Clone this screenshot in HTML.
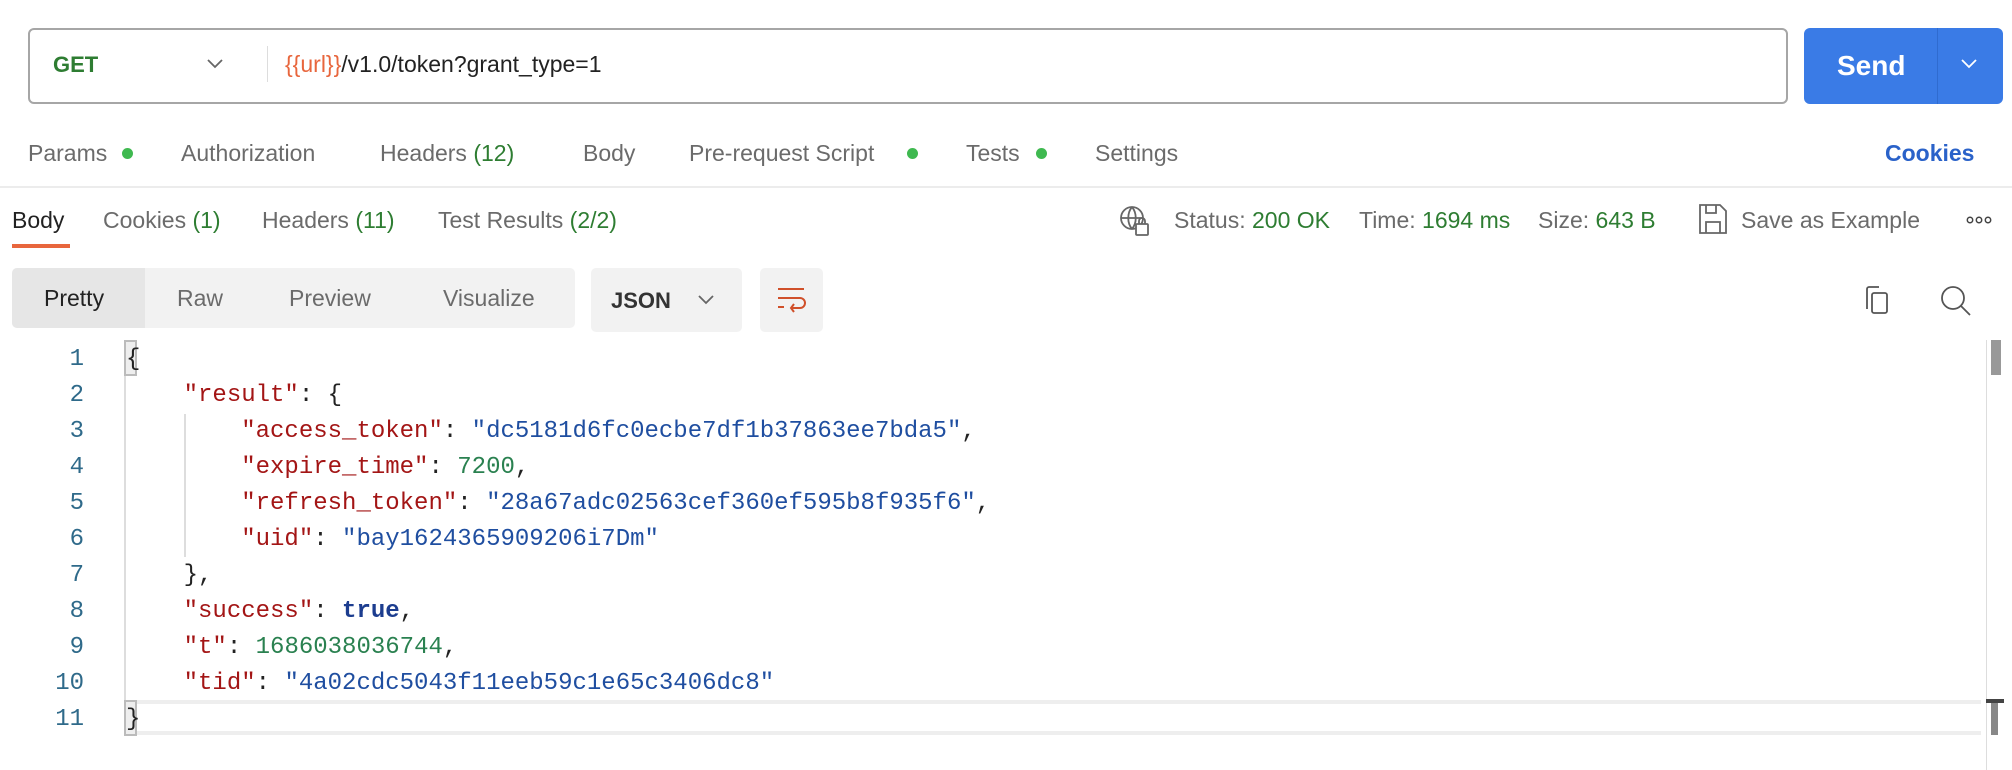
<!DOCTYPE html>
<html><head><meta charset="utf-8"><style>
*{margin:0;padding:0;box-sizing:border-box}
body{width:2012px;height:770px;background:#fff;position:relative;overflow:hidden;font-family:"Liberation Sans",sans-serif;color:#6b6b6b}
.a{position:absolute;white-space:nowrap}
.t{font-size:23px;top:140px}
.g{color:#2e7d32}
.dot{position:absolute;width:11px;height:11px;border-radius:50%;background:#3fb950;top:148px}
.s{font-size:23px;top:207px}
.code{font-family:"Liberation Mono",monospace;font-size:24px;line-height:36px}
.ln{position:absolute;left:40px;width:44px;text-align:right;color:#2f6a8a;font-family:"Liberation Mono",monospace;font-size:24px}
.k{color:#a31515}.str{color:#1f4ea0}.n{color:#2a8150}.b{color:#1c3d8f;font-weight:bold}.p{color:#222}
.code div{white-space:pre}
</style></head><body>
<div class="a" style="left:28px;top:28px;width:1760px;height:76px;border:2px solid #a6a6a6;border-radius:6px"></div>
<div class="a" style="left:53px;top:52px;font-size:22px;font-weight:bold;color:#2e7d32">GET</div>
<svg class="a" style="left:206px;top:58px" width="18" height="12"><path d="M2 2l7 7 7-7" fill="none" stroke="#666" stroke-width="1.8"/></svg>
<div class="a" style="left:267px;top:46px;width:1px;height:36px;background:#ddd"></div>
<div class="a" style="left:285px;top:51px;font-size:23px;color:#222"><span style="color:#e8663d">{{url}}</span>/v1.0/token?grant_type=1</div>
<div class="a" style="left:1804px;top:28px;width:199px;height:76px;background:#3a7be6;border-radius:6px"></div>
<div class="a" style="left:1937px;top:28px;width:1px;height:76px;background:#2f6bd0"></div>
<div class="a" style="left:1837px;top:50px;font-size:28px;font-weight:bold;color:#fff">Send</div>
<svg class="a" style="left:1960px;top:58px" width="18" height="12"><path d="M2 2l7 7 7-7" fill="none" stroke="#fff" stroke-width="1.8"/></svg>

<div class="a t" style="left:28px">Params</div><div class="dot" style="left:122px"></div>
<div class="a t" style="left:181px">Authorization</div>
<div class="a t" style="left:380px">Headers <span class="g">(12)</span></div>
<div class="a t" style="left:583px">Body</div>
<div class="a t" style="left:689px">Pre-request Script</div><div class="dot" style="left:907px"></div>
<div class="a t" style="left:966px">Tests</div><div class="dot" style="left:1036px"></div>
<div class="a t" style="left:1095px">Settings</div>
<div class="a t" style="left:1885px;color:#2a62c9;font-weight:bold">Cookies</div>
<div class="a" style="left:0;top:186px;width:2012px;height:2px;background:#ececec"></div>

<div class="a s" style="left:12px;color:#222">Body</div>
<div class="a" style="left:12px;top:244px;width:58px;height:4px;background:#e8663d"></div>
<div class="a s" style="left:103px">Cookies <span class="g">(1)</span></div>
<div class="a s" style="left:262px">Headers <span class="g">(11)</span></div>
<div class="a s" style="left:438px">Test Results <span class="g">(2/2)</span></div>
<svg class="a" style="left:1118px;top:204px" width="34" height="34" fill="none" stroke="#666" stroke-width="1.8"><circle cx="14" cy="14" r="11"/><path d="M3 14h22M14 3c-5 6-5 16 0 22M14 3c5 6 5 16 0 22"/><rect x="18" y="20" width="12" height="11" fill="#fff" rx="1"/><path d="M21 20v-3a3 3 0 0 1 6 0v3"/></svg>
<div class="a s" style="left:1174px">Status: <span class="g">200 OK</span></div>
<div class="a s" style="left:1359px">Time: <span class="g">1694 ms</span></div>
<div class="a s" style="left:1538px">Size: <span class="g">643 B</span></div>
<svg class="a" style="left:1698px;top:203px" width="30" height="32" fill="none" stroke="#666" stroke-width="1.8"><path d="M2 2h20l6 6v22H2z"/><path d="M8 2v8h10V2M8 30V19h14v11"/></svg>
<div class="a s" style="left:1741px">Save as Example</div>
<svg class="a" style="left:1966px;top:215px" width="26" height="10" fill="none" stroke="#444" stroke-width="1.5"><circle cx="4" cy="5" r="2.7"/><circle cx="13" cy="5" r="2.7"/><circle cx="22" cy="5" r="2.7"/></svg>

<div class="a" style="left:12px;top:268px;width:563px;height:60px;background:#f2f2f2;border-radius:5px"></div>
<div class="a" style="left:12px;top:268px;width:133px;height:60px;background:#e6e6e6;border-radius:5px 0 0 5px"></div>
<div class="a s" style="left:44px;top:285px;color:#222">Pretty</div>
<div class="a s" style="left:177px;top:285px">Raw</div>
<div class="a s" style="left:289px;top:285px">Preview</div>
<div class="a s" style="left:443px;top:285px">Visualize</div>
<div class="a" style="left:591px;top:268px;width:151px;height:64px;background:#f2f2f2;border-radius:5px"></div>
<div class="a s" style="left:611px;top:288px;color:#333;font-weight:bold;font-size:22px">JSON</div>
<svg class="a" style="left:697px;top:294px" width="18" height="12"><path d="M2 2l7 7 7-7" fill="none" stroke="#666" stroke-width="1.8"/></svg>
<div class="a" style="left:760px;top:268px;width:63px;height:64px;background:#f2f2f2;border-radius:5px"></div>
<svg class="a" style="left:776px;top:286px" width="32" height="30" fill="none" stroke="#d0502a" stroke-width="2"><path d="M2 3h26M2 12h22a5 5 0 0 1 0 10h-8M2 21h6M18 18l-3 4 3 4"/></svg>
<svg class="a" style="left:1861px;top:285px" width="30" height="32" fill="none" stroke="#555" stroke-width="1.8"><path d="M6 24V4a2 2 0 0 1 2-2h10"/><rect x="11" y="8" width="15" height="20" rx="2"/></svg>
<svg class="a" style="left:1939px;top:284px" width="34" height="34" fill="none" stroke="#555" stroke-width="1.8"><circle cx="14" cy="14" r="11"/><path d="M22 22l9 9"/></svg>

<div class="a" style="left:124px;top:340px;width:2px;height:395px;background:#ddd"></div>
<div class="a" style="left:184px;top:414px;width:2px;height:143px;background:#ddd"></div>
<div class="a" style="left:126px;top:700px;width:1855px;height:35px;border-top:4px solid #eee;border-bottom:4px solid #eee"></div>
<div class="a" style="left:124px;top:340px;width:13px;height:36px;border:2px solid #bbb;background:#eee"></div>
<div class="a" style="left:124px;top:700px;width:13px;height:36px;border:2px solid #bbb;background:#eee"></div>
<div class="a" style="left:1986px;top:340px;width:1px;height:430px;background:#ddd"></div>
<div class="a" style="left:1991px;top:340px;width:10px;height:35px;background:#999"></div>
<div class="a" style="left:1986px;top:699px;width:18px;height:4px;background:#444"></div>
<div class="a" style="left:1991px;top:703px;width:7px;height:32px;background:#888"></div>

<div class="ln" style="top:342px;line-height:36px">1<br>2<br>3<br>4<br>5<br>6<br>7<br>8<br>9<br>10<br>11</div>
<div class="a code p" style="left:126px;top:342px">
<div>{</div>
<div>    <span class="k">"result"</span>: {</div>
<div>        <span class="k">"access_token"</span>: <span class="str">"dc5181d6fc0ecbe7df1b37863ee7bda5"</span>,</div>
<div>        <span class="k">"expire_time"</span>: <span class="n">7200</span>,</div>
<div>        <span class="k">"refresh_token"</span>: <span class="str">"28a67adc02563cef360ef595b8f935f6"</span>,</div>
<div>        <span class="k">"uid"</span>: <span class="str">"bay1624365909206i7Dm"</span></div>
<div>    },</div>
<div>    <span class="k">"success"</span>: <span class="b">true</span>,</div>
<div>    <span class="k">"t"</span>: <span class="n">1686038036744</span>,</div>
<div>    <span class="k">"tid"</span>: <span class="str">"4a02cdc5043f11eeb59c1e65c3406dc8"</span></div>
<div>}</div>
</div>
</body></html>
